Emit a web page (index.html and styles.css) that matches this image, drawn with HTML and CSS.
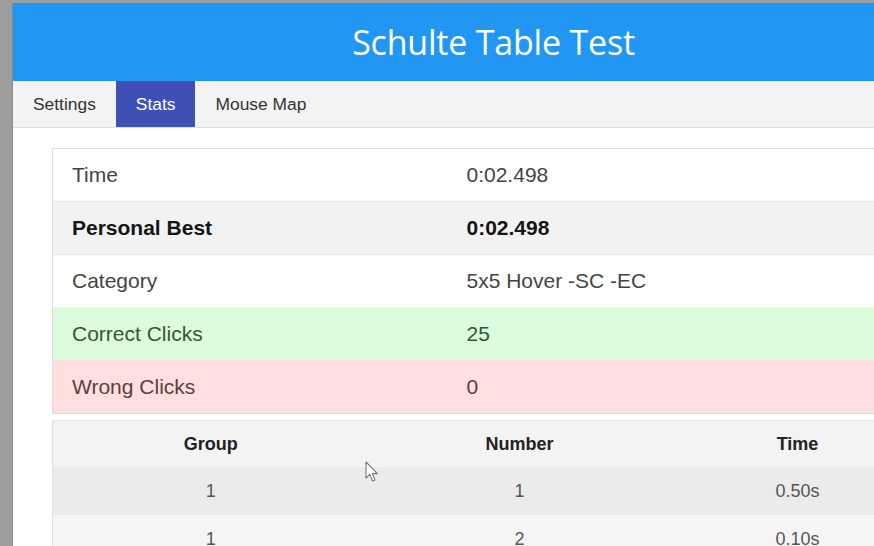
FILE: index.html
```html
<!DOCTYPE html>
<html lang="en">
<head>
<meta charset="utf-8">
<title>Schulte Table Test</title>
<link rel="stylesheet" href="styles.css">
</head>
<body>
<div class="app">
  <header class="topbar"><h1 class="title">Schulte Table Test</h1></header>
  <nav class="tabs">
    <a class="tab">Settings</a>
    <a class="tab active">Stats</a>
    <a class="tab">Mouse Map</a>
  </nav>
  <main class="content">
    <table class="stats">
      <colgroup><col class="c-label"><col></colgroup>
      <tr><td>Time</td><td>0:02.498</td></tr>
      <tr class="best"><td>Personal Best</td><td>0:02.498</td></tr>
      <tr><td>Category</td><td>5x5 Hover -SC -EC</td></tr>
      <tr class="ok"><td>Correct Clicks</td><td>25</td></tr>
      <tr class="bad"><td>Wrong Clicks</td><td>0</td></tr>
    </table>
    <table class="clicks">
      <colgroup><col class="g1"><col class="g2"><col class="g3"></colgroup>
      <thead><tr><th>Group</th><th>Number</th><th>Time</th></tr></thead>
      <tbody>
        <tr class="odd"><td>1</td><td>1</td><td>0.50s</td></tr>
        <tr class="even"><td>1</td><td>2</td><td>0.10s</td></tr>
      </tbody>
    </table>
  </main>
  <svg class="cursor" width="14" height="22" viewBox="0 0 14 22"><path d="M1 1 L1 17 L4.8 13.4 L7.6 20 L10 19 L7.3 12.6 L12.4 12.6 Z" fill="#fff" stroke="#777" stroke-width="1.1" stroke-linejoin="round"/></svg>
</div>
</body>
</html>
```
FILE: styles.css
```css
html, body {
  margin: 0;
  padding: 0;
}
body {
  background: #9d9d9d;
  overflow: hidden;
  width: 874px;
  height: 546px;
  font-family: "Liberation Sans", Arial, sans-serif;
}
.app {
  position: relative;
  margin: 3px 0 0 12px;
  background: #ffffff;
  width: 962px;
  height: 543px;
  overflow: hidden;
  border-left: 1px solid #8a8a8a;
  box-sizing: border-box;
}
.topbar {
  height: 78px;
  background: #2196f3;
  display: flex;
  align-items: center;
  justify-content: center;
}
.title {
  margin: 0;
  color: #ffffff;
  font-family: "Open Sans", "Liberation Sans", sans-serif;
  font-weight: 400;
  font-size: 34px;
  letter-spacing: -0.2px;
}
.tabs {
  display: flex;
  height: 46px;
  background: #f3f3f3;
  border-bottom: 1px solid #dedede;
}
.tab {
  display: flex;
  align-items: center;
  padding: 0 20px;
  font-size: 17.4px;
  color: #333333;
}
.tab.active {
  background: #3f51b5;
  color: #ffffff;
}
.content {
  padding: 20px 0 0 39px;
}
.stats, .clicks {
  border-collapse: collapse;
  table-layout: fixed;
}
.stats {
  width: 900px;
  border: 1px solid #dddddd;
}
.c-label { width: 395px; }
.stats td {
  height: 52px;
  padding: 0 0 0 19px;
  font-size: 21px;
  color: #444444;
  border-top: 1px solid #e6e6e6;
  vertical-align: middle;
}
.stats tr:first-child td { border-top: none; }
.stats tr.best td {
  background: #f2f2f2;
  font-weight: bold;
  color: #151515;
}
.stats tr.ok td {
  background: #ddfcdd;
  color: #2f5a32;
  border-top-color: #ddfcdd;
}
.stats tr.bad td {
  background: #ffdfdf;
  color: #5d3e3e;
  border-top-color: #ffdfdf;
}
.clicks {
  margin-top: 6px;
  width: 872px;
  border-left: 1px solid #e2e2e2;
  border-top: 1px solid #e6e6e6;
}
.g1 { width: 316px; }
.g2 { width: 302px; }
.g3 { width: 254px; }
.clicks th {
  height: 46px;
  background: #f3f3f3;
  font-size: 18px;
  font-weight: bold;
  color: #222222;
  text-align: center;
  padding: 0;
}
.clicks td {
  height: 48px;
  font-size: 18px;
  color: #555555;
  text-align: center;
  padding: 0;
}
.clicks tr.odd td { background: #ebebeb; }
.clicks tr.even td { background: #f5f5f5; }
.cursor {
  position: absolute;
  left: 352px;
  top: 458px;
}
```
